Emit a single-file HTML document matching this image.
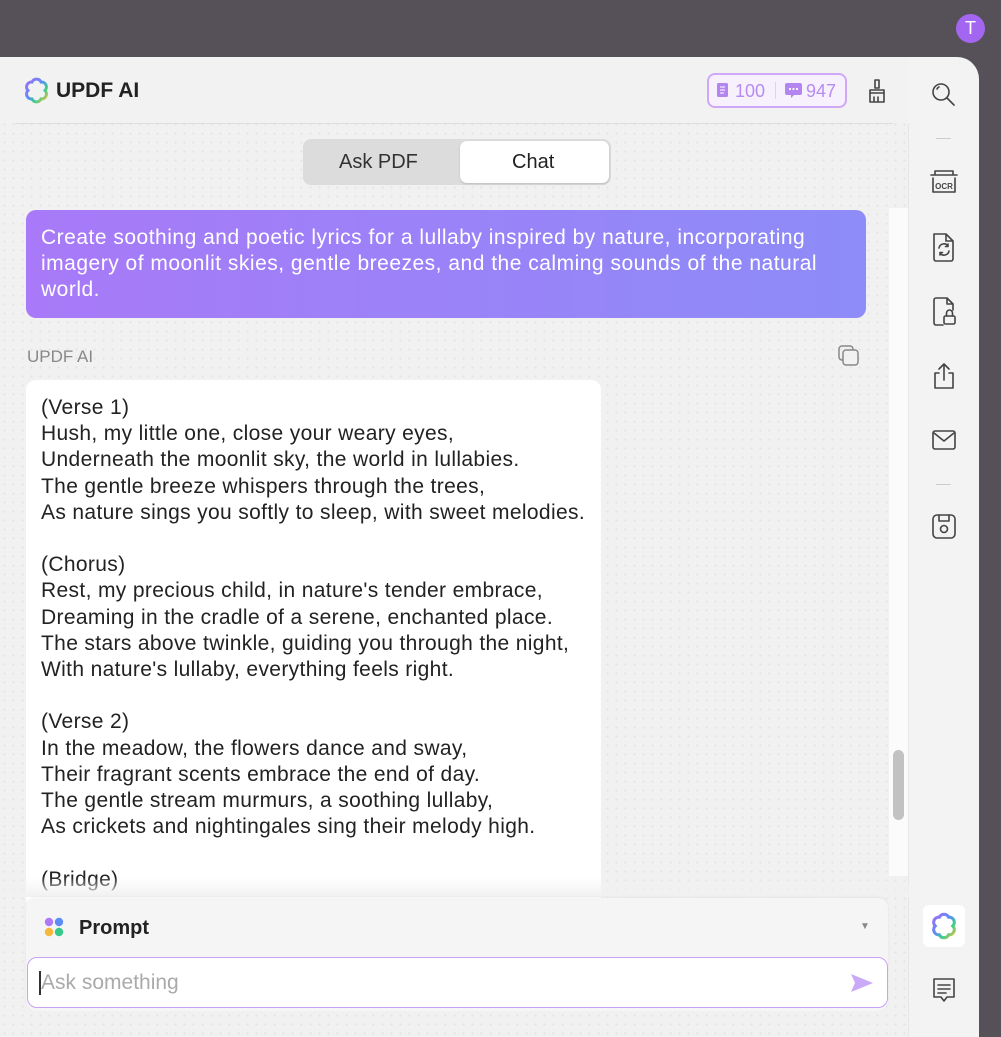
<!DOCTYPE html>
<html><head><meta charset="utf-8"><style>
*{margin:0;padding:0;box-sizing:border-box}
body{width:1001px;height:1024px;overflow:hidden;background:#565058;font-family:"Liberation Sans",sans-serif;position:relative}
.main{position:absolute;left:0;top:57px;width:979px;height:980px;background:#f3f3f3;border-top-right-radius:22px;overflow:hidden}
.left{position:absolute;left:0;top:0;width:909px;height:100%;background-color:#f1f1f1;background-image:radial-gradient(circle,#e2e2e2 0.8px,transparent 1.2px);background-size:9px 9px;border-right:1px solid #e6e6e6}
.head{position:absolute;left:0;top:0;width:909px;height:66px;background:#f2f2f2}
.avatar{position:absolute;left:956px;top:14px;width:29px;height:29px;border-radius:50%;background:#a366f0;color:#fff;font-size:18px;text-align:center;line-height:29px}
.t{position:absolute;white-space:nowrap}
.lines{font-size:21px;line-height:26.2px;color:#222;letter-spacing:0.35px}
.ic{position:absolute;fill:none;stroke:#444;stroke-width:1.6;stroke-linecap:round;stroke-linejoin:round}
</style></head><body>
<div class="avatar">T</div>
<div class="main">
<div class="left"></div>
<div class="head"></div>
<svg style="position:absolute;left:23px;top:20px" width="27" height="27" viewBox="0 0 27 27"><defs><linearGradient id="g" x1="0" y1="0" x2="1" y2="1"><stop offset="0" stop-color="#a56cf5"/><stop offset=".45" stop-color="#5b8df7"/><stop offset=".7" stop-color="#3ed08c"/><stop offset="1" stop-color="#f6b93b"/></linearGradient></defs><path d="M9 5 A5 5 0 0 1 18 5 A5 5 0 0 1 22 13.5 A5 5 0 0 1 18 22 A5 5 0 0 1 9 22 A5 5 0 0 1 5 13.5 A5 5 0 0 1 9 5Z" fill="none" stroke="url(#g)" stroke-width="3"/></svg>
<div class="t" style="left:56px;top:22px;font-size:21px;font-weight:bold;color:#222">UPDF AI</div>
<div style="position:absolute;left:707px;top:16px;width:140px;height:35px;border:2px solid #cfa9f8;border-radius:8px;background:#f7f1fe"></div>
<svg style="position:absolute;left:717px;top:26px" width="12" height="15"><rect x="0" y="0" width="11" height="14" rx="1.5" fill="#b285ef"/><path d="M3 4h5M3 7h5M3 10h4" stroke="#f3eafd" stroke-width="1.3"/></svg>
<div class="t" style="left:735px;top:24px;font-size:18px;color:#b78bf0">100</div>
<div style="position:absolute;left:775px;top:25px;width:1px;height:17px;background:#e0d0f6"></div>
<svg style="position:absolute;left:785px;top:26px" width="17" height="15"><path d="M0 2a2 2 0 0 1 2-2h13a2 2 0 0 1 2 2v8a2 2 0 0 1-2 2H9l-3 3v-3H2a2 2 0 0 1-2-2z" fill="#b285ef"/><circle cx="5" cy="6" r="1.1" fill="#fff"/><circle cx="8.5" cy="6" r="1.1" fill="#fff"/><circle cx="12" cy="6" r="1.1" fill="#fff"/></svg>
<div class="t" style="left:806px;top:24px;font-size:18px;color:#b78bf0">947</div>
<svg class="ic" style="left:866px;top:21px" width="22" height="26" viewBox="0 0 22 26"><path d="M9 2h4v8h-4zM4 12h14v3H4zM4 15h14v9H4zM8 19v5M12 19v5"/></svg>
<div style="position:absolute;left:15px;top:66px;width:878px;height:1px;background:#dedede"></div>
<div style="position:absolute;left:303px;top:82px;width:308px;height:46px;background:#dcdcdc;border-radius:8px"></div>
<div style="position:absolute;left:460px;top:84px;width:149px;height:42px;background:#fff;border-radius:7px;box-shadow:0 1px 2px rgba(0,0,0,.15)"></div>
<div class="t" style="left:339px;top:94px;font-size:20px;color:#333">Ask PDF</div>
<div class="t" style="left:512px;top:94px;font-size:20px;color:#222">Chat</div>
<div style="position:absolute;left:889px;top:151px;width:19px;height:668px;background:#fbfbfb"></div>
<div style="position:absolute;left:893px;top:693px;width:11px;height:70px;background:#c2c2c2;border-radius:6px"></div>
<div style="position:absolute;left:26px;top:153px;width:840px;height:108px;border-radius:10px;background:linear-gradient(90deg,#a879f8,#8d8cf8 100%)"></div>
<div class="t lines" style="left:41px;top:168px;color:#fff;letter-spacing:0.5px">Create soothing and poetic lyrics for a lullaby inspired by nature, incorporating<br>imagery of moonlit skies, gentle breezes, and the calming sounds of the natural<br>world.</div>
<div class="t" style="left:27px;top:290px;font-size:17px;color:#888">UPDF AI</div>
<svg class="ic" style="left:837px;top:287px;stroke:#888;stroke-width:1.5" width="24" height="24"><rect x="2" y="2" width="14" height="14" rx="3"/><rect x="6" y="6" width="15" height="15" rx="3" fill="#f1f1f1"/></svg>
<div style="position:absolute;left:26px;top:323px;width:575px;height:530px;background:#fff;border-radius:10px;overflow:hidden">
<div class="t lines" style="left:15px;top:15px">(Verse 1)<br>Hush, my little one, close your weary eyes,<br>Underneath the moonlit sky, the world in lullabies.<br>The gentle breeze whispers through the trees,<br>As nature sings you softly to sleep, with sweet melodies.<br><br>(Chorus)<br>Rest, my precious child, in nature's tender embrace,<br>Dreaming in the cradle of a serene, enchanted place.<br>The stars above twinkle, guiding you through the night,<br>With nature's lullaby, everything feels right.<br><br>(Verse 2)<br>In the meadow, the flowers dance and sway,<br>Their fragrant scents embrace the end of day.<br>The gentle stream murmurs, a soothing lullaby,<br>As crickets and nightingales sing their melody high.<br><br>(Bridge)</div>
</div>
<div style="position:absolute;left:0;top:820px;width:909px;height:20px;background:linear-gradient(rgba(241,241,241,0),#f1f1f1)"></div>
<div style="position:absolute;left:26px;top:841px;width:862px;height:113px;background:#f5f5f5;border-radius:10px;box-shadow:0 -1px 3px rgba(0,0,0,.05)"></div>
<svg style="position:absolute;left:44px;top:860px" width="22" height="22"><circle cx="5" cy="5" r="4.2" fill="#b07af5"/><circle cx="15" cy="5" r="4.2" fill="#5c8df7"/><circle cx="5" cy="15" r="4.2" fill="#f7b83a"/><circle cx="15" cy="15" r="4.2" fill="#37c98a"/></svg>
<div class="t" style="left:79px;top:860px;font-size:20px;font-weight:bold;color:#222">Prompt</div>
<div class="t" style="left:860px;top:864px;font-size:10px;color:#888">▼</div>
<div style="position:absolute;left:27px;top:900px;width:861px;height:51px;background:#fff;border:1.5px solid #c6a3f7;border-radius:10px"></div>
<div style="position:absolute;left:39px;top:914px;width:1.5px;height:24px;background:#333"></div>
<div class="t" style="left:41px;top:914px;font-size:21px;color:#aaa">Ask something</div>
<svg style="position:absolute;left:850px;top:916px" width="24" height="20"><path d="M1 1L23 10L1 19L5 10Z" fill="#c9a9f8"/></svg>
<svg class="ic" style="left:930px;top:24px" width="28" height="28"><circle cx="11" cy="11" r="8"/><path d="M17 17l7 7"/><path d="M7 8a4 4 0 0 1 2-2" /></svg>
<div style="position:absolute;left:936px;top:81px;width:15px;height:1px;background:#ccc"></div>
<svg class="ic" style="left:930px;top:110px" width="28" height="30"><path d="M5 8V4h18v4M1 8h26M3 11v14h22V11"/><text x="14" y="22" font-size="8" font-family="Liberation Sans" text-anchor="middle" fill="#444" stroke="none" font-weight="bold">OCR</text></svg>
<svg class="ic" style="left:931px;top:174px" width="26" height="32"><path d="M3 3h12l7 7v18a2 2 0 0 1-2 2H5a2 2 0 0 1-2-2zM15 3v7h7"/><path d="M8 17a5 5 0 0 1 9-2M18 20a5 5 0 0 1-9 2M17 13v2.5h-2.5M9 24v-2.5h2.5"/></svg>
<svg class="ic" style="left:931px;top:238px" width="26" height="32"><path d="M12 30H5a2 2 0 0 1-2-2V5a2 2 0 0 1 2-2h11l6 6v6M16 3v6h6"/><rect x="13" y="21" width="11" height="8" rx="1.5"/><path d="M15.5 21v-3a3 3 0 0 1 6 0v3"/></svg>
<svg class="ic" style="left:931px;top:304px" width="26" height="30"><path d="M8 12H4v15h18V12h-4M13 3v16M8 8l5-5 5 5"/></svg>
<svg class="ic" style="left:931px;top:370px" width="26" height="26"><rect x="2" y="4" width="22" height="18" rx="2"/><path d="M3 6l10 8 10-8"/></svg>
<div style="position:absolute;left:936px;top:427px;width:15px;height:1px;background:#ccc"></div>
<svg class="ic" style="left:931px;top:456px" width="26" height="28"><rect x="2" y="2" width="22" height="23" rx="4"/><path d="M8 2v6h10V2"/><circle cx="13" cy="16" r="3.5"/></svg>
<div style="position:absolute;left:923px;top:848px;width:42px;height:42px;background:#fff;border-radius:6px"></div>
<svg style="position:absolute;left:930px;top:855px" width="28" height="28" viewBox="0 0 27 27"><defs><linearGradient id="g2" x1="0" y1="0" x2="1" y2="1"><stop offset="0" stop-color="#a56cf5"/><stop offset=".45" stop-color="#5b8df7"/><stop offset=".7" stop-color="#3ed08c"/><stop offset="1" stop-color="#f6b93b"/></linearGradient></defs><path d="M9 5 A5 5 0 0 1 18 5 A5 5 0 0 1 22 13.5 A5 5 0 0 1 18 22 A5 5 0 0 1 9 22 A5 5 0 0 1 5 13.5 A5 5 0 0 1 9 5Z" fill="none" stroke="url(#g2)" stroke-width="3"/></svg>
<svg class="ic" style="left:932px;top:920px" width="24" height="28"><path d="M2 2h20v18H15l-3 4-3-4H2zM6 8h12M6 12h12M6 16h8"/></svg>
</div>
</body></html>
